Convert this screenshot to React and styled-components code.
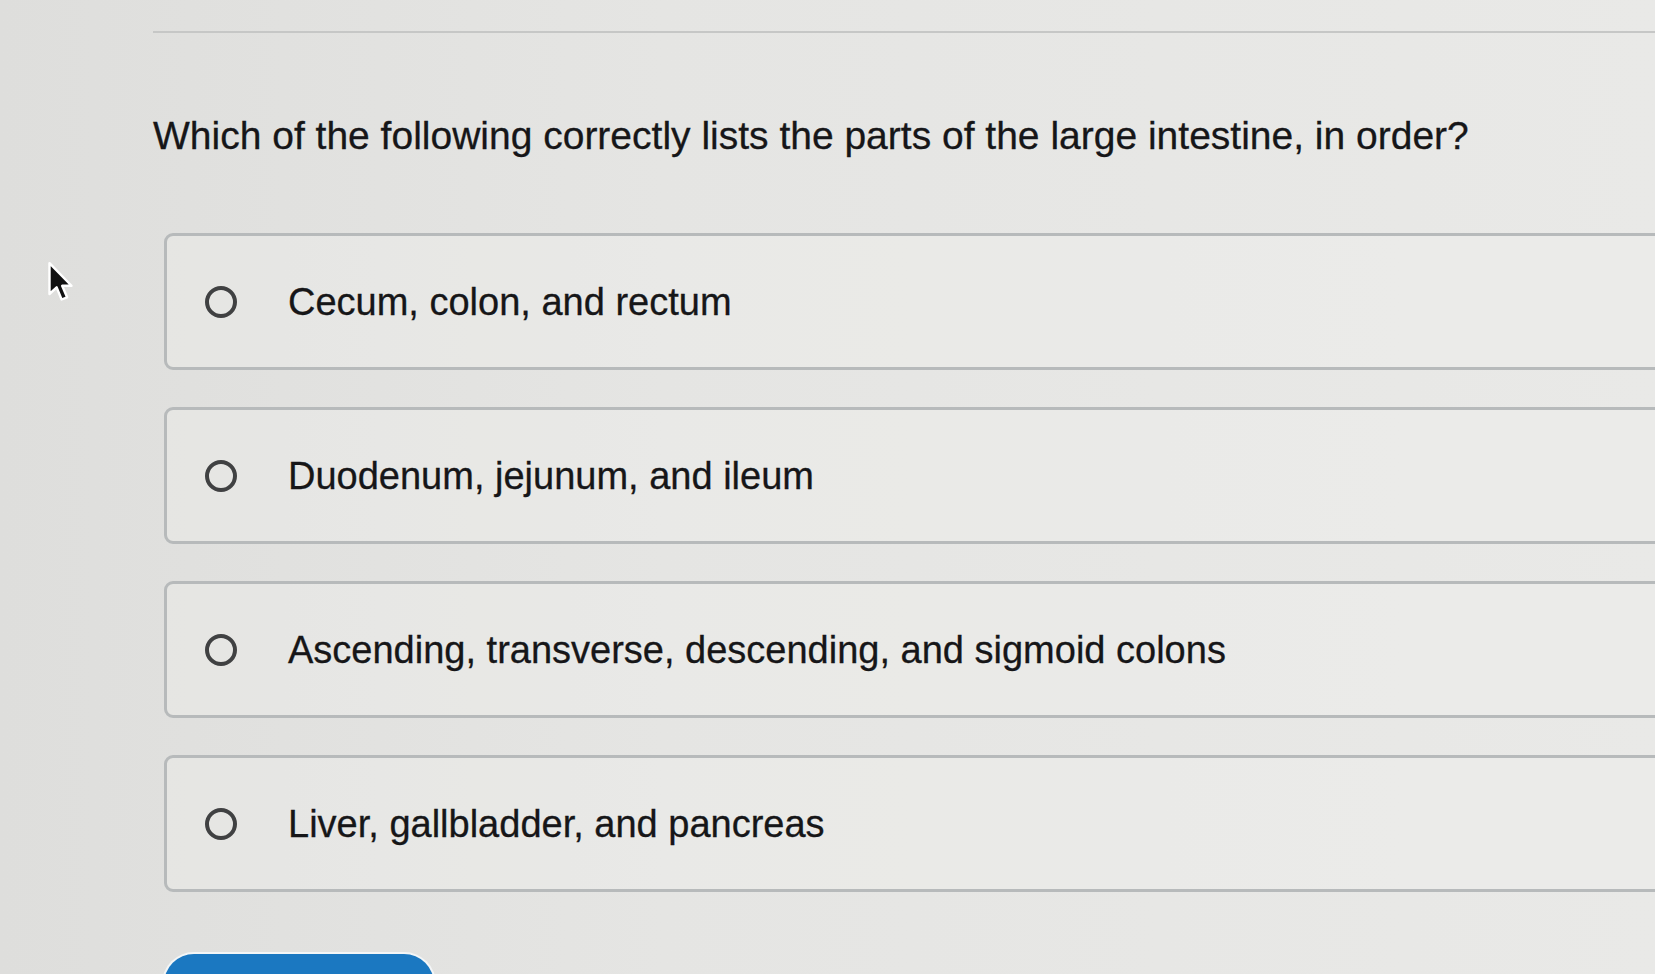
import React from "react";
import styled, { createGlobalStyle } from "styled-components";

const Global = createGlobalStyle`
  html, body { margin: 0; padding: 0; }
  body {
    width: 1655px;
    height: 974px;
    overflow: hidden;
    background: linear-gradient(90deg, #dededc 0%, #e5e5e3 40%, #e9e9e7 100%);
    font-family: "Liberation Sans", Arial, Helvetica, sans-serif;
    color: #161618;
  }
`;

const Page = styled.div`
  position: relative;
  height: 974px;
  overflow: hidden;
  padding-left: 153px;
  box-sizing: border-box;
`;

const TopRule = styled.div`
  margin-top: 31px;
  margin-right: -20px;
  border-top: 2px solid #c6c7c6;
`;

const Question = styled.h1`
  margin: 79px 0 0 0;
  font-size: 39px;
  line-height: 47px;
  font-weight: 400;
  color: #161618;
  -webkit-text-stroke: 0.3px #161618;
`;

const Options = styled.div`
  margin-top: 74px;
  margin-left: 11px;
  margin-right: -30px;
  display: flex;
  flex-direction: column;
  gap: 37px;
`;

const Option = styled.label`
  display: flex;
  align-items: center;
  height: 137px;
  box-sizing: border-box;
  border: 3px solid #b7babb;
  border-radius: 9px;
  background: rgba(240, 240, 238, 0.35);
  padding-left: 38px;
  cursor: pointer;
`;

const Radio = styled.span`
  flex: none;
  width: 32px;
  height: 32px;
  box-sizing: border-box;
  border: 4.5px solid #404142;
  border-radius: 50%;
  margin-right: 51px;
`;

const OptionText = styled.span`
  font-size: 38px;
  line-height: 44px;
  color: #161618;
  -webkit-text-stroke: 0.3px #161618;
`;

const SubmitButton = styled.button`
  display: block;
  margin: 62px 0 0 11px;
  width: 270px;
  height: 70px;
  border: none;
  border-radius: 30px;
  background: #1b78c1;
  box-shadow: 0 0 0 2px #f4f6f7;
`;

const Cursor = styled.svg`
  position: absolute;
  left: 46px;
  top: 261px;
  width: 29px;
  height: 44px;
`;

const options = [
  "Cecum, colon, and rectum",
  "Duodenum, jejunum, and ileum",
  "Ascending, transverse, descending, and sigmoid colons",
  "Liver, gallbladder, and pancreas",
];

export default function App() {
  return (
    <>
      <Global />
      <Page>
        <TopRule />
        <Question>
          Which of the following correctly lists the parts of the large intestine, in order?
        </Question>
        <Options>
          {options.map((o) => (
            <Option key={o}>
              <Radio />
              <OptionText>{o}</OptionText>
            </Option>
          ))}
        </Options>
        <SubmitButton aria-label="Submit" />
        <Cursor viewBox="0 0 26 40">
          <path
            d="M3 2 L3 30 L9.5 24 L14 35 L19 33 L14.5 22.5 L23 22.5 Z"
            fill="#111"
            stroke="#fff"
            strokeWidth="2.2"
            strokeLinejoin="round"
          />
        </Cursor>
      </Page>
    </>
  );
}
